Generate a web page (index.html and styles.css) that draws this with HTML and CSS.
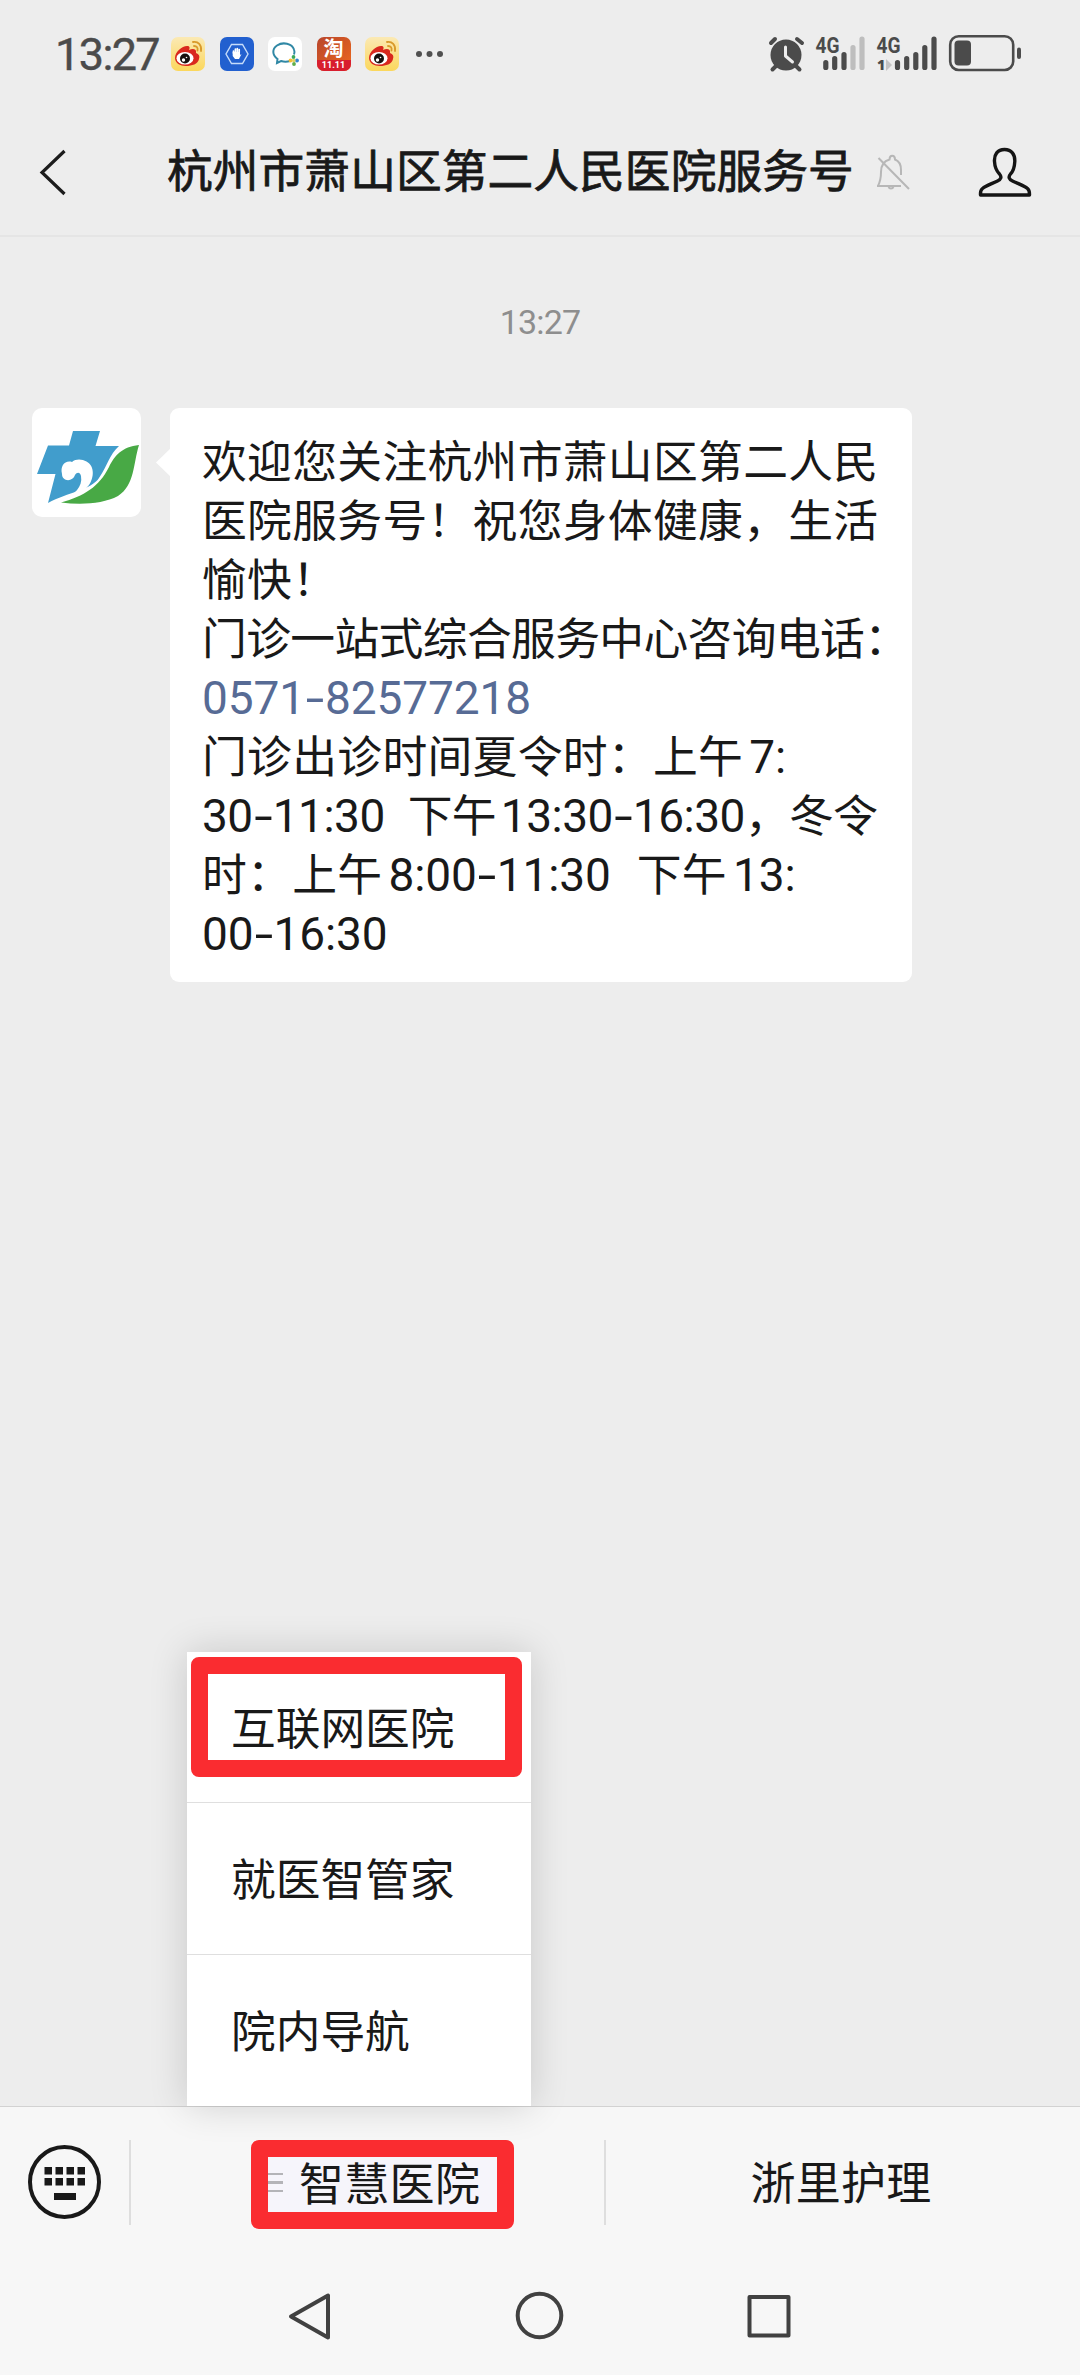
FILE: index.html
```html
<!DOCTYPE html>
<html lang="zh-CN">
<head>
<meta charset="utf-8">
<title>杭州市萧山区第二人民医院服务号</title>
<link rel="stylesheet" href="styles.css">
</head>
<body>
<svg class="defs" width="0" height="0" aria-hidden="true">
  <defs>
    <linearGradient id="gold" x1="0" y1="0" x2="0" y2="1"><stop offset="0" stop-color="#fbe9b4"/><stop offset="1" stop-color="#fbd75c"/></linearGradient>
    <symbol id="weibo" viewBox="0 0 34 34">
      <rect width="34" height="34" rx="7" fill="url(#gold)"/>
      <path d="M4 21C4 15 11 9 16 9c3 0 3 2 2 4 4-2 8-1 7 3 3 1 4 3 3 6-1 5-7 7-13 7C9 29 4 26 4 21z" fill="#d9281e"/>
      <ellipse cx="14" cy="21.3" rx="8.5" ry="6.3" fill="#fff"/>
      <circle cx="14" cy="21.5" r="5" fill="#17110f"/>
      <circle cx="12.5" cy="23" r="1.7" fill="#fff"/><circle cx="15.5" cy="20.5" r=".8" fill="#fff"/>
      <path d="M22 5c5-1 9 3 8 9M23 9c3 0 4 2 3.5 4.5" fill="none" stroke="#d99a2b" stroke-width="1.8" stroke-linecap="round"/>
    </symbol>
  </defs>
</svg>
<div class="phone">
  <header class="top">
    <div class="status">
      <span class="clock">13:27</span>
      <div class="apps">
        <svg width="34" height="34"><use href="#weibo"/></svg>
        <svg width="34" height="34" viewBox="0 0 34 34"><rect width="34" height="34" rx="7" fill="#2260cf"/><path d="M11.5 7.500h11L28 17l-5.500 9.500h-11L6 17z" fill="none" stroke="#c6dcfa" stroke-width="1.4"/><path d="M13.500 16v-2M15.400 16v-4M17.300 16v-4.500M19.200 16v-3.500" stroke="#fff" stroke-width="1.700" stroke-linecap="round"/><path d="M12.700 15h7.300v3l1.500-1-2.500 5h-4l-2.300-3z" fill="#fff"/></svg>
        <svg width="34" height="34" viewBox="0 0 34 34"><rect width="34" height="34" rx="7" fill="#fff"/><path d="M22 24c-3 1-6 1-9 0l-4 2 .5-4C4 18 4 12 9 8.500c6-4 15-2 17 4 .6 1.500.6 3.500 0 5" fill="none" stroke="#3088a5" stroke-width="2"/><circle cx="25.500" cy="20" r="1.900" fill="#3ca95a"/><circle cx="29" cy="23.500" r="1.900" fill="#3385d0"/><circle cx="22.500" cy="23.500" r="1.900" fill="#f3bd35"/><circle cx="26" cy="27" r="1.900" fill="#5eae4b"/><circle cx="25.700" cy="23.500" r="1.800" fill="#e5d060"/></svg>
        <div class="taobao"><span>淘</span><b>11.11</b></div>
        <svg width="34" height="34"><use href="#weibo"/></svg>
      </div>
      <svg class="more" width="30" height="8" viewBox="0 0 30 8" fill="#505050"><circle cx="4" cy="4" r="3"/><circle cx="14.5" cy="4" r="3"/><circle cx="25" cy="4" r="3"/></svg>
      <svg class="system" width="260" height="44" viewBox="765 32 260 44" fill="#4b4b4b">
        <circle cx="786" cy="55" r="15.5"/>
        <path d="M771 43l4-4M797 39l5 4M776 66l-3.5 3.5M796 66l3.5 3.500" stroke="#4b4b4b" stroke-width="4" stroke-linecap="round"/>
        <path d="M785.500 47v9l7 6" fill="none" stroke="#ededed" stroke-width="3" stroke-linecap="round" stroke-linejoin="round"/>
        <text class="net" x="815.500" y="53" textLength="24" lengthAdjust="spacingAndGlyphs">4G</text>
        <g stroke="#4b4b4b" stroke-width="5.2" stroke-linecap="round"><path d="M825.800 62.500v5M834.700 58.500v9M844 54.500v13"/><path d="M853 47.500v20M862 39v28.500" stroke="#bebebe"/></g>
        <text class="net" x="876.500" y="53" textLength="24" lengthAdjust="spacingAndGlyphs">4G</text>
        <text class="sim" x="877" y="70">1</text>
        <path d="M886 59l6 6-6 6z" fill="#c4c4c4"/>
        <path d="M897.500 62.500v5M906.700 58.500v9M915.800 54.500v13M924.800 47.500v20M934 39v28.500" stroke="#4b4b4b" stroke-width="5.2" stroke-linecap="round"/>
        <rect x="950.200" y="36.200" width="63" height="33.800" rx="8.5" fill="none" stroke="#4b4b4b" stroke-width="2.600"/>
        <rect x="954.500" y="40.500" width="16.500" height="25" rx="4"/>
        <rect x="1017" y="47.500" width="4" height="11.500" rx="2"/>
      </svg>
    </div>
    <div class="titlebar">
      <svg class="back" width="30" height="50" viewBox="38 148 30 50"><path d="M64.500 151L42 172.500l22.500 21.500" fill="none" stroke="#1c1c1c" stroke-width="3.200"/></svg>
      <h1>杭州市萧山区第二人民医院服务号</h1>
      <svg class="bell" width="38" height="40" viewBox="874 152 38 40" fill="none" stroke="#b7b7b7" stroke-width="2"><path d="M878 186c2-4 3-7 3-14 0-7 3-11 8.500-12.500 0-5 5.500-5 5.500 0 4 1.500 6 5 6 10.500v5M877 186h24M888.500 187c1 2 4 2 5 0M878.500 158l30.500 31"/></svg>
      <svg class="person" width="58" height="56" viewBox="976 145 58 56"><path d="M1004.500 149.500c-7 0-10.500 5-10 12 .3 6 2 9.500 5 12.500 2.500 3 1.500 5.500-2 7-5 2.500-11.500 4.500-15 7.500-2.500 2-2 4.500-2 6.500h49c0-2 .3-4.500-2-6.500-3.500-3-10-5-15-7.500-3.500-1.500-4.500-4-2-7 3-3 4-6.500 4.300-12.500.3-7-3.300-12-10.300-12z" fill="none" stroke="#151515" stroke-width="3.4" stroke-linejoin="round"/></svg>
    </div>
  </header>

  <main class="chat">
    <time>13:27</time>
    <div class="message">
      <svg class="avatar" width="109" height="109" viewBox="0 0 109 109">
        <rect width="109" height="109" rx="10" fill="#fff"/>
        <path d="M41 23h27l-4.500 15H87C77 47 76 57 67 70 59 82 36 84 16 95l7.500-29H5l11-28.500h21z" fill="#419dcc"/>
        <path d="M107 37C90 39 83 47 77 59 67 79 52 88 29 94.500c20 2.500 42 1.500 57-6.500 17-11 15-32 21-51z" fill="#48a945"/>
        <path d="M30 66C28 58 33 52 40 54c4-3.500 10-3 14.500-.5C63 58 62 70 57 77c-3 4-7 6-10 7.500L31 92c11-5 20-13 18-24-1-4-4-4-6-1-2 7-13 7-13-1z" fill="#fff"/>
      </svg>
      <div class="bubble">
        <p>欢迎您关注杭州市萧山区第二人民</p>
        <p>医院服务号！祝您身体健康，生活</p>
        <p>愉快！</p>
        <p class="tight">门诊一站式综合服务中心咨询电话：</p>
        <p class="phone-number"><span class="num">0571<i>-</i>82577218</span></p>
        <p>门诊出诊时间夏令时：上午<span class="num after-han">7:</span></p>
        <p class="hours"><span class="num">30<i>-</i>11:30</span><span class="gap">下午</span><span class="num after-han">13:30<i>-</i>16:30</span>，冬令</p>
        <p>时：上午<span class="num after-han">8:00<i>-</i>11:30</span><span class="gap">下午</span><span class="num after-han">13:</span></p>
        <p><span class="num">00<i>-</i>16:30</span></p>
      </div>
    </div>
  </main>

  <footer class="bottom">
    <div class="menubar">
      <div class="keyboard">
        <svg width="74" height="76" viewBox="28 2144 74 76" fill="#191919"><ellipse cx="64.500" cy="2182" rx="34.500" ry="35" fill="none" stroke="#191919" stroke-width="4"/><path d="M44.500 2167h7.500v7.500h-7.500zM55.500 2167h7.500v7.500h-7.500zM66.500 2167h7.500v7.500h-7.500zM77.500 2167h7.500v7.500h-7.500zM44.500 2178h7.500v7.500h-7.500zM55.500 2178h7.500v7.500h-7.500zM66.500 2178h7.500v7.500h-7.500zM77.500 2178h7.500v7.500h-7.500zM54 2193h22v7H54z"/></svg>
      </div>
      <div class="tab">
        <div class="highlight"><span class="lines"><i></i><i></i><i></i></span><span class="label">智慧医院</span></div>
        <nav class="popup">
          <a><span class="mark"></span>互联网医院</a>
          <a>就医智管家</a>
          <a>院内导航</a>
        </nav>
      </div>
      <div class="tab last">浙里护理</div>
    </div>
    <svg class="system-nav" width="1080" height="60" viewBox="0 2286 1080 60" fill="none" stroke="#414141" stroke-width="4" stroke-linejoin="round"><path d="M328 2295.500v42l-37-21z"/><circle cx="539.500" cy="2315.500" r="21.800"/><rect x="749.500" y="2297" width="39" height="38.500"/></svg>
  </footer>
</div>
</body>
</html>
```

FILE: styles.css
```css
* { box-sizing: border-box; }
body, h1, p { margin: 0; }
body { font-family: "Noto Sans CJK SC", sans-serif; color: #191919; background: #ededed; }
i { font-style: normal; }
svg { display: block; flex: none; }
.defs { position: absolute; }
.phone { width: 1080px; height: 2375px; display: flex; flex-direction: column; background: #ededed; }

.top { height: 237px; border-bottom: 2px solid #e5e5e5; }
.status { height: 107px; padding: 0 55px 0 55px; display: flex; align-items: center; }
.clock { width: 116px; padding-top: 3px; font-family: Roboto, sans-serif; font-size: 45px; line-height: 60px; letter-spacing: -1.6px; color: #4b4b4b; -webkit-text-stroke: .4px #4b4b4b; white-space: nowrap; }
.apps { display: flex; gap: 14.5px; }
.taobao { width: 34px; height: 34px; border-radius: 7px; background: linear-gradient(135deg, #b8452c, #ee6a1c); color: #fff; text-align: center; display: flex; flex-direction: column; }
.taobao span { height: 23px; font-size: 20px; line-height: 22px; font-weight: bold; }
.taobao b { height: 11px; border-radius: 0 0 7px 7px; background: #d81e2e; font-family: Roboto, sans-serif; font-size: 9px; line-height: 11px; }
.more { margin-left: 16px; }
.system { margin-left: auto; }
.net { font-family: Roboto, sans-serif; font-size: 22px; font-weight: 700; }
.sim { font-family: "Open Sans", sans-serif; font-size: 14px; font-weight: 800; }

.titlebar { height: 130px; padding: 0 46px 0 38px; display: flex; align-items: center; }
.back { margin-top: 2px; }
h1 { margin: -9px 0 0 99px; width: 690px; font-size: 45.7px; line-height: 60px; font-weight: 400; letter-spacing: .1px; -webkit-text-stroke: .8px #191919; white-space: nowrap; }
.bell { margin-left: 17px; }
.person { margin-left: auto; margin-top: 2px; }

.chat { flex: 1; }
.chat time { display: block; padding-top: 60px; height: 171px; text-align: center; font-family: Roboto, sans-serif; font-size: 34px; line-height: 50px; letter-spacing: -.8px; color: #8e8e8e; }
.message { display: flex; align-items: flex-start; padding-left: 32px; gap: 29px; }
.bubble { position: relative; width: 742px; height: 574px; padding: 21px 0 0 32px; border-radius: 9px; background: #fff; font-size: 44.8px; line-height: 59px; letter-spacing: .3px; white-space: nowrap; }
.bubble::before { content: ""; position: absolute; left: -14px; top: 40px; width: 15px; height: 29px; background: #fff; clip-path: polygon(0 50%, 100% 0, 100% 100%); }
.bubble p { height: 59px; }
.num { font-family: Roboto, sans-serif; font-size: 46px; letter-spacing: -.1px; line-height: 1; }
.num i { display: inline-block; width: 20px; text-align: center; transform: scaleX(1.45); }
.bubble .tight { letter-spacing: -.65px; }
.phone-number { color: #576b95; }
.after-han { margin-left: 6px; }
.gap { margin-left: 26px; }
.bubble .hours { letter-spacing: -.8px; }
.hours .num { letter-spacing: -.5px; }
.hours .gap { margin-left: 23px; }
.hours .after-han { margin-left: 5px; }

.bottom { height: 269px; background: #f7f7f7; border-top: 1px solid #d2d2d2; }
.menubar { height: 151px; display: flex; align-items: center; font-size: 45px; line-height: 54px; }
.keyboard { width: 131px; height: 85px; padding-left: 28px; display: flex; align-items: center; border-right: 2px solid #dedede; }
.keyboard svg { margin-top: -1px; }
.tab { position: relative; width: 475px; height: 85px; display: flex; align-items: center; border-right: 2px solid #dedede; white-space: nowrap; }
.tab.last { width: 474px; padding: 0 4px 3px 0; justify-content: center; letter-spacing: .3px; border: 0; }
.highlight { position: relative; z-index: 2; margin: 3px 0 0 120px; width: 263px; height: 89px; flex: none; display: flex; align-items: center; gap: 16px; border: 17px solid #fa2c30; border-radius: 8px; background: #f6f5fb; letter-spacing: .3px; }
.label { margin-top: -5px; }
.lines { width: 15px; margin-top: -3px; display: flex; flex-direction: column; gap: 6px; }
.lines i { height: 2.5px; background: #b4b4b8; }
.popup { position: absolute; left: 56px; bottom: 119px; width: 344px; height: 454px; background: #fff; box-shadow: 0 0 36px rgba(0, 0, 0, .16); display: flex; flex-direction: column; font-size: 44.7px; }
.popup a { position: relative; height: 151.5px; padding: 0 0 2px 44px; display: flex; align-items: center; border-bottom: 1px solid #dfdfdf; }
.popup a:last-child { border: 0; }
.mark { position: absolute; left: 4px; top: 5px; width: 331px; height: 120px; border: 17px solid #fa2c30; border-radius: 8px; }
.system-nav { margin-top: 28px; }
```
